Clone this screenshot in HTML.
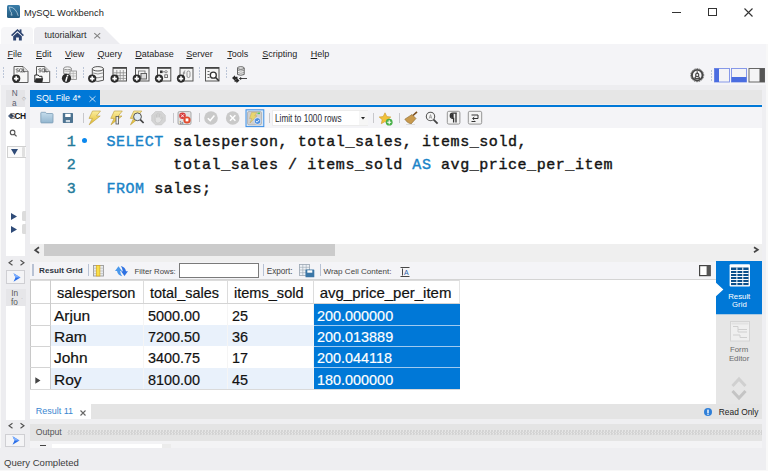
<!DOCTYPE html>
<html><head><meta charset="utf-8">
<style>
*{margin:0;padding:0;box-sizing:border-box}
html,body{width:768px;height:471px;overflow:hidden;background:#efeff2;font-family:"Liberation Sans",sans-serif;color:#1e1e1e}
.a{position:absolute}
.t{position:absolute;white-space:pre;line-height:1}
.b{-webkit-text-stroke:0.2px currentColor}
.mono{font-family:"Liberation Mono",monospace;-webkit-text-stroke:0.4px currentColor}
svg{overflow:visible}
</style></head><body>
<div class="a" style="left:0px;top:0px;width:768px;height:24px;background:#ffffff;"></div>
<svg class="a" style="left:7px;top:5.3px" width="13" height="13" viewBox="0 0 13 13"><defs><linearGradient id="lg" x1="0" y1="0" x2="0" y2="1"><stop offset="0" stop-color="#3a7eaa"/><stop offset="1" stop-color="#245b80"/></linearGradient></defs><rect x="0" y="0" width="13" height="13" rx="1.5" fill="url(#lg)"/><path d="M2.2 2Q5.5 1.8 8 4.5Q10.2 7 11.2 10.8M2.2 2L3.4 6.3L4.6 7.8L4.1 10.2L5.6 9.9" stroke="#c8dcea" stroke-width="0.7" fill="none"/></svg>
<div class="t " style="left:24px;top:7.65px;font-size:9.75px;color:#1f1f1f;;transform:scaleX(0.95);transform-origin:0 0">MySQL Workbench</div>
<div class="a" style="left:672px;top:12px;width:9px;height:1px;background:#333;"></div>
<div class="a" style="left:708px;top:8px;width:9px;height:8px;background:transparent;border:1px solid #333"></div>
<svg class="a" style="left:744px;top:8px" width="9" height="9" viewBox="0 0 9 9"><path d="M0.5 0.5L8.5 8.5M8.5 0.5L0.5 8.5" stroke="#333" stroke-width="1.1"/></svg>
<div class="a" style="left:0px;top:24px;width:768px;height:20px;background:#ffffff;"></div>
<div class="a" style="left:1px;top:27px;width:32px;height:17px;background:#f6f6f8;border-radius:4px 4px 0 0"></div>
<svg class="a" style="left:34px;top:27px" width="90" height="17" viewBox="0 0 90 17"><path d="M0 4Q0 0 4 0L69 0L86 17L0 17Z" fill="#ededf1"/></svg>
<svg class="a" style="left:11px;top:29px" width="13" height="12" viewBox="0 0 13 12"><path d="M0.6 6.6L6.5 1L12.4 6.6" fill="none" stroke="#2c4470" stroke-width="1.6"/><rect x="8.6" y="0.4" width="1.9" height="3.4" fill="#2c4470"/><path d="M2.2 7.2L6.5 3.4L10.8 7.2V11.6H7.9V8.6H5.1V11.6H2.2Z" fill="#2c4470"/></svg>
<div class="t " style="left:44.5px;top:31.38px;font-size:9px;color:#2b2b2b;">tutorialkart</div>
<svg class="a" style="left:93.5px;top:33.3px" width="6.5" height="5.5" viewBox="0 0 6.5 5.5"><path d="M0.3 0.2L6.2 5.3M6.2 0.2L0.3 5.3" stroke="#808080" stroke-width="1.1"/></svg>
<div class="a" style="left:0px;top:44px;width:768px;height:41px;background:#f4f4f7;"></div>
<div class="t " style="left:7.5px;top:49.58px;font-size:9px;color:#1e1e1e;"><u style="text-underline-offset:1px">F</u>ile</div>
<div class="t " style="left:36px;top:49.58px;font-size:9px;color:#1e1e1e;"><u style="text-underline-offset:1px">E</u>dit</div>
<div class="t " style="left:65px;top:49.58px;font-size:9px;color:#1e1e1e;"><u style="text-underline-offset:1px">V</u>iew</div>
<div class="t " style="left:97.5px;top:49.58px;font-size:9px;color:#1e1e1e;"><u style="text-underline-offset:1px">Q</u>uery</div>
<div class="t " style="left:135.3px;top:49.58px;font-size:9px;color:#1e1e1e;"><u style="text-underline-offset:1px">D</u>atabase</div>
<div class="t " style="left:186.3px;top:49.58px;font-size:9px;color:#1e1e1e;"><u style="text-underline-offset:1px">S</u>erver</div>
<div class="t " style="left:227.3px;top:49.58px;font-size:9px;color:#1e1e1e;"><u style="text-underline-offset:1px">T</u>ools</div>
<div class="t " style="left:262.3px;top:49.58px;font-size:9px;color:#1e1e1e;"><u style="text-underline-offset:1px">S</u>cripting</div>
<div class="t " style="left:310.7px;top:49.58px;font-size:9px;color:#1e1e1e;"><u style="text-underline-offset:1px">H</u>elp</div>
<div class="a" style="left:3px;top:67px;width:1px;height:11px;background:repeating-linear-gradient(#bcc6d8 0 2px,transparent 2px 3px)"></div>
<svg class="a" style="left:0px;top:0px" width="1" height="1" viewBox="0 0 1 1"></svg>
<svg class="a" style="left:0px;top:0px" width="768" height="90" viewBox="0 0 768 90"><path d="M14 66.5H23L28 71.5V82.5H14Z" fill="#f7f7f7" stroke="#5a5a5a" stroke-width="1"/><path d="M23 66.5V71.5H28" fill="#ddd" stroke="#5a5a5a" stroke-width="0.7"/><path d="M18.599999999999998 68.8H17.0Q16.2 68.8 16.2 69.6Q16.2 70.3 17.0 70.3H17.8Q18.599999999999998 70.3 18.599999999999998 71.1Q18.599999999999998 71.89999999999999 17.8 71.89999999999999H16.2M20.099999999999998 68.8H21.5Q22.1 68.8 22.1 69.5V71.2Q22.1 71.89999999999999 21.5 71.89999999999999H20.099999999999998Q19.5 71.89999999999999 19.5 71.2V69.5Q19.5 68.8 20.099999999999998 68.8ZM21.2 71.3L22.5 72.39999999999999M23.299999999999997 68.8V71.89999999999999H25.2" fill="none" stroke="#4a4a4a" stroke-width="0.75"/><circle cx="16.2" cy="78.6" r="4.1" fill="#2a2a2a"/><path d="M13.945 78.6H18.455M16.2 76.345V80.85499999999999" stroke="#fff" stroke-width="1.6"/><path d="M36.5 66.5H44.7L49.7 71.5V82.5H36.5Z" fill="#f7f7f7" stroke="#5a5a5a" stroke-width="1"/><path d="M44.7 66.5V71.5H49.7" fill="#ddd" stroke="#5a5a5a" stroke-width="0.7"/><path d="M41.1 68.8H39.5Q38.7 68.8 38.7 69.6Q38.7 70.3 39.5 70.3H40.300000000000004Q41.1 70.3 41.1 71.1Q41.1 71.89999999999999 40.300000000000004 71.89999999999999H38.7M42.6 68.8H44.0Q44.6 68.8 44.6 69.5V71.2Q44.6 71.89999999999999 44.0 71.89999999999999H42.6Q42.0 71.89999999999999 42.0 71.2V69.5Q42.0 68.8 42.6 68.8ZM43.7 71.3L45.0 72.39999999999999M45.800000000000004 68.8V71.89999999999999H47.7" fill="none" stroke="#4a4a4a" stroke-width="0.75"/><path d="M34.8 82V75H38.2L39.2 76.3H42V82Z" fill="#fff" stroke="#2a2a2a" stroke-width="1"/><path d="M34.3 82.3L35.8 78.2H43.2L41.8 82.3Z" fill="#2a2a2a"/><path d="M63.7 68.3V73.5Q67.5 75 71.3 73.5V68.3" fill="#eee" stroke="#777" stroke-width="0.8"/><ellipse cx="67.5" cy="68.3" rx="3.8" ry="1.5" fill="#f4f4f4" stroke="#777" stroke-width="0.8"/><path d="M63.7 70.8Q67.5 72.3 71.3 70.8" fill="none" stroke="#999" stroke-width="0.6"/><rect x="70" y="71" width="6.5" height="8.5" fill="#eee" stroke="#888" stroke-width="0.8"/><path d="M70 73.5H76.5M70 76H76.5M73.2 71V79.5" stroke="#aaa" stroke-width="0.6"/><circle cx="66.5" cy="78.3" r="4.6" fill="#2a2a2a"/><circle cx="67.6" cy="75.6" r="0.9" fill="#fff"/><path d="M66.9 77.3L65.9 81" stroke="#fff" stroke-width="1.5" stroke-linecap="round"/><path d="M92.3 68.8V80.2Q97.9 82.6 103.5 80.2V68.8" fill="#f5f5f5" stroke="#555" stroke-width="1"/><ellipse cx="97.9" cy="68.8" rx="5.6" ry="2.2" fill="#f5f5f5" stroke="#555" stroke-width="1"/><path d="M92.3 72.8Q97.9 75.2 103.5 72.8M92.3 76.6Q97.9 79 103.5 76.6" fill="none" stroke="#777" stroke-width="0.8"/><circle cx="92.2" cy="78.6" r="4.1" fill="#2a2a2a"/><path d="M89.94500000000001 78.6H94.455M92.2 76.345V80.85499999999999" stroke="#fff" stroke-width="1.6"/><rect x="113" y="67.5" width="13.5" height="13.5" fill="#f4f4f4" stroke="#555" stroke-width="1"/><rect x="113" y="67" width="13.5" height="1.8" fill="#444"/><rect x="135.5" y="67.5" width="13.5" height="13.5" fill="#f4f4f4" stroke="#555" stroke-width="1"/><rect x="135.5" y="67" width="13.5" height="1.8" fill="#444"/><rect x="157.5" y="67.5" width="13.3" height="13.5" fill="#f4f4f4" stroke="#555" stroke-width="1"/><rect x="157.5" y="67" width="13.3" height="1.8" fill="#444"/><rect x="180" y="67.5" width="13" height="13.5" fill="#f4f4f4" stroke="#555" stroke-width="1"/><rect x="180" y="67" width="13" height="1.8" fill="#444"/><rect x="205.5" y="67.5" width="13.5" height="13.5" fill="#f4f4f4" stroke="#555" stroke-width="1"/><rect x="205.5" y="67" width="13.5" height="1.8" fill="#444"/><path d="M116.8 70V80.5M120.2 70V80.5M123.3 70V80.5M113.5 72.8H126M113.5 75.6H126M113.5 78.4H126" stroke="#8a8a8a" stroke-width="0.8"/><circle cx="114.6" cy="78.6" r="4.1" fill="#2a2a2a"/><path d="M112.345 78.6H116.85499999999999M114.6 76.345V80.85499999999999" stroke="#fff" stroke-width="1.6"/><rect x="138.5" y="71" width="6.5" height="5" fill="none" stroke="#777" stroke-width="0.9"/><rect x="141" y="73.5" width="5.5" height="5.5" fill="#ddd" stroke="#555" stroke-width="0.9"/><circle cx="136.8" cy="78.6" r="4.1" fill="#2a2a2a"/><path d="M134.54500000000002 78.6H139.055M136.8 76.345V80.85499999999999" stroke="#fff" stroke-width="1.6"/><rect x="160" y="70.5" width="2.6" height="2.6" fill="#333"/><path d="M162.6 71.8H164.5L166 70.5L167.5 71.8L166 73.1L164.5 71.8" fill="none" stroke="#666" stroke-width="0.8"/><rect x="164.8" y="74.8" width="2.6" height="2.8" fill="none" stroke="#555" stroke-width="0.8"/><circle cx="159" cy="78.6" r="4.1" fill="#2a2a2a"/><path d="M156.745 78.6H161.255M159 76.345V80.85499999999999" stroke="#fff" stroke-width="1.6"/><path d="M185.3 70.8Q184.3 70.6 184.1 71.8L183.2 76.8M182.8 73H185.2" fill="none" stroke="#777" stroke-width="0.8"/><rect x="187" y="71" width="3" height="6.5" rx="1.4" fill="none" stroke="#888" stroke-width="0.9"/><circle cx="181" cy="78.6" r="4.1" fill="#2a2a2a"/><path d="M178.745 78.6H183.255M181 76.345V80.85499999999999" stroke="#fff" stroke-width="1.6"/><path d="M207.5 71.5H209.5M207.5 74.5H209.5M207.5 77.5H209.5" stroke="#666" stroke-width="1.2"/><circle cx="213.3" cy="75.2" r="3" fill="#fff" stroke="#333" stroke-width="1.3"/><path d="M215.4 77.3L218.8 80.7" stroke="#333" stroke-width="1.6"/><path d="M237.5 68V74.5Q240.8 76 244.2 74.5V68" fill="#f5f5f5" stroke="#555" stroke-width="0.9"/><ellipse cx="240.8" cy="68" rx="3.4" ry="1.3" fill="#f5f5f5" stroke="#555" stroke-width="0.9"/><path d="M237.5 70.3Q240.8 71.8 244.2 70.3M237.5 72.5Q240.8 74 244.2 72.5" fill="none" stroke="#777" stroke-width="0.7"/><path d="M232 78L235 75.2V76.8H237.5V79.2H235V80.8Z M239.5 80.5L236.5 83.2V81.8H234.5V79.5H236.5V77.8Z" fill="#2a2a2a"/><path d="M239 78.5H247" stroke="#333" stroke-width="0.9"/><path d="M240 77L242.5 78.5L240 80" fill="#333"/></svg>
<div class="a" style="left:56px;top:67px;width:1px;height:11px;background:repeating-linear-gradient(#bcc6d8 0 2px,transparent 2px 3px)"></div>
<div class="a" style="left:83px;top:67px;width:1px;height:11px;background:repeating-linear-gradient(#bcc6d8 0 2px,transparent 2px 3px)"></div>
<div class="a" style="left:199px;top:67px;width:1px;height:11px;background:repeating-linear-gradient(#bcc6d8 0 2px,transparent 2px 3px)"></div>
<div class="a" style="left:226px;top:67px;width:1px;height:11px;background:repeating-linear-gradient(#bcc6d8 0 2px,transparent 2px 3px)"></div>
<svg class="a" style="left:690px;top:67.5px" width="15" height="15" viewBox="0 0 15 15"><circle cx="7.2" cy="7.2" r="6.5" fill="none" stroke="#555" stroke-width="1" stroke-dasharray="1 0.75"/><circle cx="7.2" cy="7.2" r="5.3" fill="none" stroke="#474747" stroke-width="1.9"/><circle cx="7.2" cy="7" r="1.6" fill="none" stroke="#4a4a4a" stroke-width="1.2"/><path d="M7.2 3.2V5.4M6 8.3L4.6 10.3M8.4 8.3L9.8 10.3M4.4 10.5H10" fill="none" stroke="#4a4a4a" stroke-width="1.2"/></svg>
<div class="a" style="left:711px;top:70px;width:1px;height:11px;background:repeating-linear-gradient(#bcc6d8 0 2px,transparent 2px 3px)"></div>
<svg class="a" style="left:714px;top:68px" width="52" height="15" viewBox="0 0 52 15"><rect x="0.5" y="0.5" width="15" height="13.5" fill="#f4f4f6" stroke="#7b8fe6" stroke-width="0.9"/><rect x="0.5" y="0.5" width="4.5" height="13.5" fill="#4a6de0"/><rect x="17.5" y="0.5" width="15" height="13.5" fill="#f4f4f6" stroke="#7b8fe6" stroke-width="0.9"/><rect x="17.5" y="9" width="15" height="5" fill="#4a6de0"/><rect x="35" y="0.5" width="15.5" height="13.5" fill="#f4f4f6" stroke="#666" stroke-width="1"/><rect x="45.5" y="0.5" width="5" height="13.5" fill="#555"/></svg>
<div class="a" style="left:0px;top:85px;width:768px;height:363px;background:#ededf0;"></div>
<div class="a" style="left:0px;top:85px;width:1px;height:386px;background:#f8f8f8;"></div>
<div class="a" style="left:6px;top:90px;width:19px;height:17px;background:#e4e4e7;"></div>
<div class="t " style="left:11.7px;top:89.86px;font-size:8.2px;color:#5a6070;">N</div>
<div class="t " style="left:12px;top:99.66px;font-size:8.2px;color:#5a6070;">a</div>
<div class="t " style="left:22.3px;top:96.79px;font-size:4.5px;color:#999;">◇</div>
<div class="a" style="left:6px;top:107px;width:19px;height:149px;background:#ffffff;"></div>
<svg class="a" style="left:8.3px;top:112.5px" width="6" height="6" viewBox="0 0 6 6"><path d="M3 0L6 3L3 6L0 3Z" fill="#4a5f80"/></svg>
<div class="t " style="left:14.4px;top:111.69px;font-size:8.4px;color:#161616;font-weight:bold;letter-spacing:-0.4px">CH</div>
<div class="t " style="left:10px;top:111.69px;font-size:8.4px;color:#161616;font-weight:bold;opacity:0.55">S</div>
<svg class="a" style="left:9px;top:129px" width="9" height="8" viewBox="0 0 9 8"><circle cx="3.6" cy="3.4" r="2.3" fill="none" stroke="#555" stroke-width="1.1"/><path d="M5.3 5.2L7.6 7.4" stroke="#555" stroke-width="1.3"/></svg>
<div class="a" style="left:7px;top:146px;width:18.5px;height:12px;background:#fafafa;border:1px solid #d0d0d0;border-right:none"></div>
<svg class="a" style="left:11px;top:149px" width="7" height="6" viewBox="0 0 7 6"><path d="M0 0H7L3.5 6Z" fill="#2f4b78"/></svg>
<div class="a" style="left:22px;top:147px;width:3px;height:10px;background:#e0e0e0;border-radius:1px"></div>
<svg class="a" style="left:11px;top:213px" width="6" height="7" viewBox="0 0 6 7"><path d="M0 0L6 3.5L0 7Z" fill="#2f4b78"/></svg>
<svg class="a" style="left:11px;top:226px" width="6" height="7" viewBox="0 0 6 7"><path d="M0 0L6 3.5L0 7Z" fill="#2f4b78"/></svg>
<div class="a" style="left:22px;top:211px;width:3.5px;height:10px;background:#dcdcdc;border-radius:1.5px 0 0 1.5px"></div>
<div class="a" style="left:22px;top:224px;width:3.5px;height:10px;background:#dcdcdc;border-radius:1.5px 0 0 1.5px"></div>
<svg class="a" style="left:7.6px;top:260.2px" width="17.5" height="5.5" viewBox="0 0 17.5 5.5"><path d="M4.5 0.3L1 2.75L4.5 5.2M12.5 0.3L16 2.75L12.5 5.2" fill="none" stroke="#505050" stroke-width="1.1"/></svg>
<div class="a" style="left:5.5px;top:270px;width:19.5px;height:13.6px;background:#f4f4f6;border:1px solid #cfcfd3"></div>
<svg class="a" style="left:12.5px;top:273px" width="8" height="9" viewBox="0 0 8 9"><path d="M0.5 0.3L7.5 4.5L0.5 8.7L2.5 4.5Z" fill="#2a6ee8"/><path d="M0.5 0.3L7.5 4.5L2.5 4.5Z" fill="#7fb0ff"/></svg>
<div class="a" style="left:6px;top:288.5px;width:19.5px;height:17.5px;background:#e6e6e9;"></div>
<div class="t " style="left:11.3px;top:288.57px;font-size:8.3px;color:#5a5a5a;">In</div>
<div class="t " style="left:11px;top:298.17px;font-size:8.3px;color:#5a5a5a;">fo</div>
<div class="t " style="left:21px;top:294.92px;font-size:6px;color:#aaa;">·</div>
<div class="a" style="left:6px;top:306px;width:19px;height:114px;background:#ffffff;"></div>
<svg class="a" style="left:7.6px;top:423.2px" width="17.5" height="5.5" viewBox="0 0 17.5 5.5"><path d="M4.5 0.3L1 2.75L4.5 5.2M12.5 0.3L16 2.75L12.5 5.2" fill="none" stroke="#505050" stroke-width="1.1"/></svg>
<div class="a" style="left:5px;top:433.8px;width:20px;height:13px;background:#f4f4f6;border:1px solid #cfcfd3"></div>
<svg class="a" style="left:12px;top:436px" width="8" height="9" viewBox="0 0 8 9"><path d="M0.5 0.3L7.5 4.5L0.5 8.7L2.5 4.5Z" fill="#2a6ee8"/><path d="M0.5 0.3L7.5 4.5L2.5 4.5Z" fill="#7fb0ff"/></svg>
<div class="a" style="left:30px;top:90px;width:732px;height:14px;background:#e6e6e6;"></div>
<div class="a" style="left:30px;top:104px;width:732px;height:1px;background:#f0eeee;"></div>
<div class="a" style="left:30px;top:90px;width:70px;height:16px;background:#0078d7;"></div>
<div class="t " style="left:36px;top:92.69px;font-size:9.7px;color:#ffffff;;transform:scaleX(0.91);transform-origin:0 0">SQL File 4*</div>
<svg class="a" style="left:88.5px;top:96px" width="7" height="6" viewBox="0 0 7 6"><path d="M0.5 0.3L6.5 5.7M6.5 0.3L0.5 5.7" stroke="#d4e6f7" stroke-width="0.9"/></svg>
<div class="a" style="left:30px;top:105px;width:732px;height:2px;background:#0078d7;"></div>
<div class="a" style="left:30px;top:107px;width:732px;height:21px;background:#f4f4f7;"></div>
<svg class="a" style="left:0px;top:0px" width="768" height="130" viewBox="0 0 768 130"><defs><linearGradient id="fg" x1="0" y1="0" x2="0" y2="1"><stop offset="0" stop-color="#c5dcec"/><stop offset="1" stop-color="#93b6cf"/></linearGradient><linearGradient id="yg" x1="0" y1="0" x2="0" y2="1"><stop offset="0" stop-color="#fbeea0"/><stop offset="1" stop-color="#e2b928"/></linearGradient></defs><path d="M40.8 113Q40.8 112.3 41.5 112.3H45.5L46.5 113.5H52.3Q53 113.5 53 114.2V122.2Q53 122.9 52.3 122.9H41.5Q40.8 122.9 40.8 122.2Z" fill="url(#fg)" stroke="#7c9db6" stroke-width="0.8"/><rect x="62.8" y="112.9" width="10.2" height="10" rx="0.6" fill="#4d7391"/><rect x="65.2" y="113.8" width="5.4" height="3.2" fill="#fff"/><rect x="65.8" y="120" width="4.2" height="2.2" fill="#cfdbe5"/><path d="M92.5 111H100.5L96.5 116H100.2L89.2 124.8L92.3 118.4H89.0Z" fill="url(#yg)" stroke="#b89a3a" stroke-width="0.6"/><path d="M114.3 111H122.3L118.3 116H122.0L111.0 124.8L114.1 118.4H110.8Z" fill="url(#yg)" stroke="#b89a3a" stroke-width="0.6"/><rect x="116" y="116.5" width="2.6" height="7.5" fill="#eee" stroke="#555" stroke-width="0.8"/><path d="M133.8 111H141.8L137.8 116H141.5L130.5 124.8L133.6 118.4H130.3Z" fill="url(#yg)" stroke="#b89a3a" stroke-width="0.6"/><circle cx="137.5" cy="116.8" r="3.9" fill="#dfeaf3" stroke="#555" stroke-width="1"/><path d="M140.3 119.6L143.6 123" stroke="#444" stroke-width="1.7"/><path d="M155.5 111.5H161.5L165.3 115.3V121.1L161.5 124.9H155.5L151.7 121.1V115.3Z" fill="#d4d4d4" stroke="#c4c4c4" stroke-width="0.6"/><path d="M155.2 119.5V115.6Q155.2 114.8 155.9 114.8Q156.6 114.8 156.6 115.6V117.5V114.4Q156.6 113.6 157.3 113.6Q158 113.6 158 114.4V117.3V114.1Q158 113.3 158.7 113.3Q159.4 113.3 159.4 114.1V117.4V114.8Q159.4 114 160.1 114Q160.8 114 160.8 114.8V118.8L161.8 117.6Q162.4 117 162.9 117.5L160.8 121.3Q160 123 158.2 123H157.4Q155.2 123 155.2 120.5Z" fill="#e2e2e2" stroke="#bdbdbd" stroke-width="0.5"/><rect x="178" y="111.5" width="13" height="13" rx="1.5" fill="#e2e2e2" stroke="#9a9a9a" stroke-width="0.8"/><circle cx="182.5" cy="115.8" r="3.3" fill="#d83a3a"/><path d="M181 114.3L184 117.3M184 114.3L181 117.3" stroke="#fff" stroke-width="0.9"/><circle cx="187" cy="120" r="3.6" fill="#e24a2c"/><rect x="185.6" y="118.4" width="2.8" height="3" fill="#fff"/><text x="179.6" y="123.8" font-size="3.5" font-family="Liberation Sans" fill="#222">1s</text><circle cx="211" cy="118" r="6.8" fill="#c9c9c9"/><path d="M207.8 118.2L210.2 120.6L214.4 115.6" stroke="#fff" stroke-width="1.5" fill="none"/><circle cx="232.7" cy="118" r="6.8" fill="#c9c9c9"/><path d="M230 115.3L235.4 120.7M235.4 115.3L230 120.7" stroke="#fff" stroke-width="1.5"/><rect x="246" y="109.8" width="17.8" height="16.8" fill="#dbe7f3" stroke="#3a8ee6" stroke-width="1"/><rect x="247.5" y="111.5" width="14" height="13.3" rx="1.5" fill="#cfcfcf" stroke="#a0a0a0" stroke-width="0.6"/><path d="M251.5 112.5H257L254.8 115.8H257L250 123L251.8 118.5H249.6Z" fill="#e9d56e" stroke="#b8a050" stroke-width="0.4"/><circle cx="257.5" cy="121" r="3.3" fill="#4a8ee0" stroke="#fff" stroke-width="0.6"/><path d="M255.9 121L257.1 122.2L259.2 119.9" stroke="#fff" stroke-width="0.9" fill="none"/><rect x="257.5" y="112.5" width="2.5" height="1.6" fill="#5ac85a"/><path d="M385 112.8L386.8 116.6L390.8 117L387.8 119.7L388.7 123.7L385 121.6L381.3 123.7L382.2 119.7L379.2 117L383.2 116.6Z" fill="#f2c33a" stroke="#c7962a" stroke-width="0.6"/><circle cx="389.2" cy="122.2" r="3.4" fill="#48b048"/><path d="M387.2 122.2H391.2M389.2 120.2V124.2" stroke="#fff" stroke-width="1.1"/><path d="M404.8 119.2L412 114.5L416 118.5L411 124Q407 123 404.8 119.2Z" fill="#c99a4e" stroke="#8a6a30" stroke-width="0.6"/><path d="M413 115.5L417 111.8" stroke="#7a4e1e" stroke-width="1.6"/><path d="M406 124.5H415" stroke="#ddd" stroke-width="1"/><circle cx="430.5" cy="116.5" r="4.2" fill="#f5f5f5" stroke="#555" stroke-width="1.1"/><path d="M429.2 118.6L430.5 114.6L431.8 118.6M429.7 117.3H431.3" fill="none" stroke="#888" stroke-width="0.7"/><path d="M433.6 119.6L437.6 123.6" stroke="#444" stroke-width="1.8"/><rect x="447.3" y="111.3" width="12.6" height="12.8" rx="1.5" fill="#f3f3f3" stroke="#8a8a8a" stroke-width="0.9"/><path d="M456.8 113.2H452.8Q450.3 113.2 450.3 115.8Q450.3 118.3 452.8 118.3H453.6V122.5M456 113.2V122.5" fill="none" stroke="#333" stroke-width="1.3"/><path d="M453.6 113.5V118.2H452.8Q450.8 118 450.8 115.8Q450.8 113.6 452.8 113.5Z" fill="#333"/><rect x="468.3" y="111.3" width="13.4" height="12.8" rx="1.5" fill="#f3f3f3" stroke="#8a8a8a" stroke-width="0.9"/><path d="M471.5 115H478V118.5H472.8M474.3 117L472.6 118.5L474.3 120" stroke="#333" stroke-width="1" fill="none"/><path d="M471.5 121.5H475.5" stroke="#333" stroke-width="1"/></svg>
<div class="a" style="left:82.5px;top:113px;width:1px;height:10px;background:#c8c8cc;"></div>
<div class="a" style="left:173px;top:113px;width:1px;height:10px;background:#c8c8cc;"></div>
<div class="a" style="left:199px;top:113px;width:1px;height:9px;background:#c8c8cc;"></div>
<div class="a" style="left:268.5px;top:113px;width:1px;height:10px;background:#c8c8cc;"></div>
<div class="a" style="left:372.5px;top:113px;width:1px;height:10px;background:#c8c8cc;"></div>
<div class="a" style="left:398.6px;top:113px;width:1px;height:10px;background:#c8c8cc;"></div>
<div class="a" style="left:272px;top:110px;width:96px;height:16px;background:#ffffff;border:1px solid #ececec"></div>
<div class="a" style="left:358.5px;top:111px;width:9px;height:14px;background:#f6f6f6;"></div>
<svg class="a" style="left:361px;top:116.5px" width="4" height="3" viewBox="0 0 4 3"><path d="M0 0H4L2 2.5Z" fill="#222"/></svg>
<div class="t " style="left:275.2px;top:113.83px;font-size:10px;color:#2a2a33;;transform:scaleX(0.82);transform-origin:0 0">Limit to 1000 rows</div>
<div class="a" style="left:30px;top:128px;width:732px;height:116px;background:#ffffff;"></div>
<div class="t mono " style="left:66.8px;top:134.50px;font-size:15px;color:#237a9a;">1</div>
<div class="t mono " style="left:66.8px;top:158.30px;font-size:15px;color:#237a9a;">2</div>
<div class="t mono " style="left:66.8px;top:182.00px;font-size:15px;color:#237a9a;">3</div>
<div class="a" style="left:82px;top:138.4px;width:5px;height:5px;background:#0b88ee;border-radius:50%"></div>
<div class="t mono " style="left:106.4px;top:134.50px;font-size:15px;color:#141414;;letter-spacing:0.56px"><span style="color:#1a84c8">SELECT</span> salesperson, total_sales, items_sold,</div>
<div class="t mono " style="left:106.4px;top:158.30px;font-size:15px;color:#141414;;letter-spacing:0.56px">       total_sales / items_sold <span style="color:#1a84c8">AS</span> avg_price_per_item</div>
<div class="t mono " style="left:106.4px;top:182.00px;font-size:15px;color:#141414;;letter-spacing:0.56px"><span style="color:#1a84c8">FROM</span> sales;</div>
<div class="a" style="left:30px;top:244px;width:732px;height:13px;background:#efefef;"></div>
<div class="a" style="left:44px;top:244.3px;width:291px;height:11.3px;background:#cbcbcb;"></div>
<svg class="a" style="left:34px;top:246.7px" width="6" height="6.3" viewBox="0 0 6 6.3"><path d="M5 0.3L1.2 3.15L5 6" fill="none" stroke="#444" stroke-width="1.7"/></svg>
<svg class="a" style="left:753px;top:247px" width="6" height="5.5" viewBox="0 0 6 5.5"><path d="M1 0.3L4.8 2.75L1 5.2" fill="none" stroke="#444" stroke-width="1.7"/></svg>
<div class="a" style="left:30px;top:257px;width:732px;height:4.5px;background:#efefef;"></div>
<div class="a" style="left:30px;top:261.5px;width:686px;height:17.5px;background:#f4f4f7;"></div>
<div class="a" style="left:32.2px;top:264.3px;width:1.5px;height:12px;background:#b8c2d4;"></div>
<div class="t " style="left:39.1px;top:267.04px;font-size:8.1px;color:#2f3440;font-weight:bold">Result Grid</div>
<div class="a" style="left:87.5px;top:264.3px;width:1px;height:12px;background:#b8c2d4;"></div>
<svg class="a" style="left:93px;top:265px" width="11" height="11" viewBox="0 0 11 11"><rect x="0.5" y="0.5" width="10" height="10.5" fill="#e8ecf0" stroke="#9a9a9a" stroke-width="0.9"/><path d="M0.5 3.2H10.5M0.5 6H10.5M0.5 8.6H10.5" stroke="#b8b8b8" stroke-width="0.7"/><rect x="3.3" y="0.5" width="3.6" height="10.5" fill="#f7df4a" stroke="#d8a620" stroke-width="0.7"/></svg>
<svg class="a" style="left:115.2px;top:265.7px" width="13" height="10.2" viewBox="0 0 13 10.2"><path d="M0 5L3.5 0.3L7 5H5.2Q5.4 8 7.2 10.2Q2.8 9.2 2 5Z" fill="#4a98ec"/><path d="M13 5.2L9.5 9.9L6 5.2H7.8Q7.6 2.2 5.8 0Q10.2 1 11 5.2Z" fill="#2f72e2"/></svg>
<div class="t " style="left:134.6px;top:268.20px;font-size:7.8px;color:#444;">Filter Rows:</div>
<div class="a" style="left:179.4px;top:262.5px;width:79.5px;height:15px;background:#ffffff;border:1px solid #7a7a7a"></div>
<div class="a" style="left:262.8px;top:264.3px;width:1px;height:12px;background:#b8c2d4;"></div>
<div class="t " style="left:266.7px;top:267.86px;font-size:8.2px;color:#444;">Export:</div>
<svg class="a" style="left:298.7px;top:263.5px" width="16" height="13.5" viewBox="0 0 16 13.5"><rect x="0.5" y="0.5" width="10" height="11" fill="#eef2f6" stroke="#9aa6b2" stroke-width="0.8"/><path d="M0.5 3.3H10.5M0.5 6H10.5M0.5 8.7H10.5M3.8 0.5V11.5M7.2 0.5V11.5" stroke="#9aa6b2" stroke-width="0.6"/><rect x="6.5" y="5.5" width="8.8" height="7.8" rx="0.6" fill="#3b76a6"/><rect x="8.3" y="6.3" width="5" height="2.4" fill="#fff"/></svg>
<div class="a" style="left:319.8px;top:264.3px;width:1px;height:12px;background:#b8c2d4;"></div>
<div class="t " style="left:323.4px;top:267.94px;font-size:8.1px;color:#444;">Wrap Cell Content:</div>
<svg class="a" style="left:400px;top:266.5px" width="10" height="10" viewBox="0 0 10 10"><path d="M0.5 0.5H9.5M0.5 9.5H9.5M2.5 1.5V8.5" stroke="#333" stroke-width="0.9"/><text x="4" y="8.3" font-size="7" font-family="Liberation Sans" fill="#2a5fa8">A</text></svg>
<svg class="a" style="left:699px;top:264.6px" width="12" height="11" viewBox="0 0 12 11"><rect x="0.6" y="0.6" width="10.6" height="10" fill="#fff" stroke="#444" stroke-width="1.2"/><rect x="7.6" y="0.6" width="3.6" height="10" fill="#555"/></svg>
<div class="a" style="left:30px;top:279px;width:686px;height:125px;background:#ffffff;"></div>
<div class="a" style="left:30px;top:279px;width:686px;height:1px;background:#d4d4d4;"></div>
<div class="a" style="left:30px;top:280px;width:430px;height:109px;background:transparent;border-left:1px solid #c8c8c8;border-top:1px solid #dcdcdc;border-right:1px solid #e4e4e4"></div>
<div class="a" style="left:30px;top:303px;width:430px;height:1px;background:#d4d4d4;"></div>
<div class="a" style="left:51px;top:325px;width:262px;height:21.3px;background:#e9f1fb;"></div>
<div class="a" style="left:51px;top:367.7px;width:262px;height:21.3px;background:#e9f1fb;"></div>
<div class="a" style="left:313px;top:304px;width:146.5px;height:85px;background:#0078d7;"></div>
<div class="a" style="left:313px;top:324.5px;width:146.5px;height:1px;background:#9fcaf0;"></div>
<div class="a" style="left:313px;top:345.8px;width:146.5px;height:1px;background:#9fcaf0;"></div>
<div class="a" style="left:313px;top:367.2px;width:146.5px;height:1px;background:#9fcaf0;"></div>
<div class="a" style="left:50px;top:280px;width:1px;height:109px;background:#cccccc;"></div>
<div class="a" style="left:143px;top:280px;width:1px;height:23px;background:#dcdcdc;"></div>
<div class="a" style="left:143px;top:304px;width:1px;height:85px;background:#f5f5f5;"></div>
<div class="a" style="left:227px;top:280px;width:1px;height:23px;background:#dcdcdc;"></div>
<div class="a" style="left:227px;top:304px;width:1px;height:85px;background:#f5f5f5;"></div>
<div class="a" style="left:312.5px;top:280px;width:1px;height:23px;background:#dcdcdc;"></div>
<div class="a" style="left:312.5px;top:304px;width:1px;height:85px;background:#f5f5f5;"></div>
<div class="a" style="left:30px;top:324.5px;width:21px;height:1px;background:#d4d4d4;"></div>
<div class="a" style="left:30px;top:345.8px;width:21px;height:1px;background:#d4d4d4;"></div>
<div class="a" style="left:30px;top:367.2px;width:21px;height:1px;background:#d4d4d4;"></div>
<div class="a" style="left:30px;top:389px;width:430px;height:1px;background:#dadada;"></div>
<div class="t b" style="left:57.3px;top:285.10px;font-size:15px;color:#111;;transform:scaleX(0.97);transform-origin:0 0">salesperson</div>
<div class="t b" style="left:150.3px;top:285.10px;font-size:15px;color:#111;;transform:scaleX(0.96);transform-origin:0 0">total_sales</div>
<div class="t b" style="left:234.2px;top:285.10px;font-size:15px;color:#111;;transform:scaleX(0.97);transform-origin:0 0">items_sold</div>
<div class="t b" style="left:319.7px;top:285.10px;font-size:15px;color:#111;;transform:scaleX(1.0);transform-origin:0 0">avg_price_per_item</div>
<div class="t b" style="left:54px;top:307.58px;font-size:15.5px;color:#111;;transform:scaleX(1.0);transform-origin:0 0">Arjun</div>
<div class="t b" style="left:147.7px;top:307.58px;font-size:15.5px;color:#111;;transform:scaleX(0.93);transform-origin:0 0">5000.00</div>
<div class="t b" style="left:231.6px;top:307.58px;font-size:15.5px;color:#111;;transform:scaleX(0.93);transform-origin:0 0">25</div>
<div class="t b" style="left:317px;top:307.58px;font-size:15.5px;color:#fff;;transform:scaleX(0.93);transform-origin:0 0">200.000000</div>
<div class="t b" style="left:54px;top:328.98px;font-size:15.5px;color:#111;;transform:scaleX(1.0);transform-origin:0 0">Ram</div>
<div class="t b" style="left:147.7px;top:328.98px;font-size:15.5px;color:#111;;transform:scaleX(0.93);transform-origin:0 0">7200.50</div>
<div class="t b" style="left:231.6px;top:328.98px;font-size:15.5px;color:#111;;transform:scaleX(0.93);transform-origin:0 0">36</div>
<div class="t b" style="left:317px;top:328.98px;font-size:15.5px;color:#fff;;transform:scaleX(0.93);transform-origin:0 0">200.013889</div>
<div class="t b" style="left:54px;top:350.48px;font-size:15.5px;color:#111;;transform:scaleX(1.0);transform-origin:0 0">John</div>
<div class="t b" style="left:147.7px;top:350.48px;font-size:15.5px;color:#111;;transform:scaleX(0.93);transform-origin:0 0">3400.75</div>
<div class="t b" style="left:231.6px;top:350.48px;font-size:15.5px;color:#111;;transform:scaleX(0.93);transform-origin:0 0">17</div>
<div class="t b" style="left:317px;top:350.48px;font-size:15.5px;color:#fff;;transform:scaleX(0.93);transform-origin:0 0">200.044118</div>
<div class="t b" style="left:54px;top:371.78px;font-size:15.5px;color:#111;;transform:scaleX(1.0);transform-origin:0 0">Roy</div>
<div class="t b" style="left:147.7px;top:371.78px;font-size:15.5px;color:#111;;transform:scaleX(0.93);transform-origin:0 0">8100.00</div>
<div class="t b" style="left:231.6px;top:371.78px;font-size:15.5px;color:#111;;transform:scaleX(0.93);transform-origin:0 0">45</div>
<div class="t b" style="left:317px;top:371.78px;font-size:15.5px;color:#fff;;transform:scaleX(0.93);transform-origin:0 0">180.000000</div>
<svg class="a" style="left:35px;top:376.6px" width="6" height="7" viewBox="0 0 6 7"><path d="M0.3 0.3L5.5 3.5L0.3 6.7Z" fill="#444"/></svg>
<div class="a" style="left:716px;top:262px;width:46px;height:142px;background:#e6e6e6;"></div>
<svg class="a" style="left:716px;top:282px" width="8" height="15" viewBox="0 0 8 15"><path d="M0 0L7.4 7.5L0 15Z" fill="#fff"/></svg>
<svg class="a" style="left:716px;top:261.4px" width="46" height="53.2" viewBox="0 0 46 53.2"><path d="M0 0H46V53.2H0V35.3L7.4 28.5L0 21.7Z" fill="#0078d7"/><rect x="13.6" y="3.2" width="20.4" height="22.4" rx="1" fill="#fff"/><rect x="15" y="6.5" width="17.6" height="17.6" fill="#0b4f8a"/><path d="M15 9.5H32.6M15 12.5H32.6M15 15.5H32.6M15 18.5H32.6M15 21.5H32.6M20.9 6.5V24.1M26.8 6.5V24.1" stroke="#fff" stroke-width="1"/></svg>
<div class="t " style="left:728.2px;top:293.40px;font-size:7.8px;color:#ffffff;">Result</div>
<div class="t " style="left:732px;top:300.80px;font-size:7.8px;color:#ffffff;">Grid</div>
<svg class="a" style="left:729.7px;top:320.5px" width="20" height="20.5" viewBox="0 0 20 20.5"><rect x="0.5" y="0.5" width="19" height="19.5" fill="#efefef" stroke="#d4d4d4" stroke-width="1"/><rect x="1.5" y="1.5" width="17" height="2" fill="#e2e2e2"/><path d="M3 5.5H8V8.5H17M8 8.5V11H17M3 14H10V16.5H17" fill="none" stroke="#cfcfcf" stroke-width="1"/></svg>
<div class="t " style="left:730px;top:346.10px;font-size:7.8px;color:#6a6a6a;">Form</div>
<div class="t " style="left:728.9px;top:354.90px;font-size:7.8px;color:#6a6a6a;">Editor</div>
<svg class="a" style="left:731px;top:376.8px" width="16" height="23.2" viewBox="0 0 16 23.2"><path d="M1.5 9L8 2L14.5 9" fill="none" stroke="#d0d0d0" stroke-width="3"/><path d="M1.5 14L8 21L14.5 14" fill="none" stroke="#c4c4c4" stroke-width="3"/></svg>
<div class="a" style="left:30px;top:404px;width:732px;height:15px;background:#e4e4e4;"></div>
<div class="a" style="left:30px;top:404px;width:61px;height:14.5px;background:#ffffff;"></div>
<div class="t " style="left:35.7px;top:407.18px;font-size:9px;color:#3a86d0;">Result 11</div>
<svg class="a" style="left:80px;top:409.8px" width="6" height="6" viewBox="0 0 6 6"><path d="M0.5 0.5L5.5 5.5M5.5 0.5L0.5 5.5" stroke="#666" stroke-width="1.1"/></svg>
<svg class="a" style="left:704px;top:408px" width="8" height="8" viewBox="0 0 8 8"><circle cx="4" cy="4" r="4" fill="#2f7fd8"/><rect x="3.3" y="1.6" width="1.4" height="3.4" fill="#fff"/><rect x="3.3" y="5.6" width="1.4" height="1.2" fill="#fff"/></svg>
<div class="t " style="left:718.8px;top:407.89px;font-size:8.4px;color:#222;">Read Only</div>
<div class="a" style="left:30px;top:419px;width:732px;height:5px;background:#efeff1;"></div>
<div class="a" style="left:30px;top:424px;width:732px;height:17px;background:#e4e4e4;"></div>
<div class="t " style="left:35.7px;top:428.14px;font-size:8.7px;color:#555;">Output</div>
<div class="a" style="left:67px;top:429.5px;width:695px;height:5.5px;background:repeating-conic-gradient(#d0d0d0 0 25%,#e9e9e9 0 50%) 0 0/3px 2.75px;opacity:0.85"></div>
<div class="a" style="left:30px;top:441px;width:732px;height:7px;background:#f3f3f5;"></div>
<div class="a" style="left:52px;top:444px;width:110px;height:3.7px;background:#ffffff;"></div>
<div class="a" style="left:162px;top:444px;width:9px;height:3.7px;background:#ececec;"></div>
<div class="a" style="left:40px;top:444.5px;width:6px;height:1.2px;background:#444;"></div>
<div class="a" style="left:0px;top:448px;width:768px;height:22px;background:#eeeef1;"></div>
<div class="a" style="left:0px;top:470px;width:768px;height:1px;background:#f8f8f8;"></div>
<div class="t " style="left:4.3px;top:458.00px;font-size:9.8px;color:#3c3c3c;;transform:scaleX(0.975);transform-origin:0 0">Query Completed</div>
<div class="a" style="left:762px;top:85px;width:6px;height:363px;background:#efeff2;"></div>
<div class="a" style="left:766px;top:44px;width:2px;height:427px;background:#f8f8f8;"></div>
</body></html>
